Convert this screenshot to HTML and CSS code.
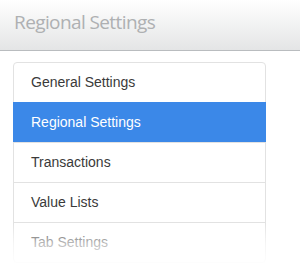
FILE: index.html
```html
<!DOCTYPE html>
<html lang="en">
<head>
  <meta charset="UTF-8">
  <title>Regional Settings</title>
  <link rel="stylesheet" href="styles.css">
</head>
<body>
  <div class="header">
    <h1>Regional Settings</h1>
  </div>

  <div class="content">
    <ul class="menu">
      <li>General Settings</li>
      <li class="active">Regional Settings</li>
      <li>Transactions</li>
      <li>Value Lists</li>
      <li>Tab Settings</li>
    </ul>
    <div class="fade"></div>
  </div>
</body>
</html>
```

FILE: styles.css
```css
* {
  margin: 0;
  padding: 0;
  box-sizing: border-box;
}

body {
  background: white;
  font-family: 'Liberation Sans', Arial, sans-serif;
  width: 300px;
  height: 271px;
  overflow: hidden;
  position: relative;
}

.header {
  height: 51px;
  background: linear-gradient(180deg, #ffffff, #e4e5e6);
  border-bottom: 1px solid #b9bcbf;
  padding: 9px 14px 0;
}

h1 {
  font-family: 'Open Sans', sans-serif;
  font-size: 19px;
  font-weight: 400;
  color: #aeb0b2;
  letter-spacing: -0.6px;
}

.content {
  padding: 11px 34px 0 13px;
}

.menu {
  list-style: none;
  border: 1px solid #e2e2e2;
  border-radius: 4px;
}

.menu li {
  height: 40px;
  line-height: 39px;
  padding-left: 17px;
  font-size: 14px;
  color: #3a3a3a;
  border-top: 1px solid #e2e2e2;
}

.menu li:first-child {
  border-top: none;
  height: 39px;
}

.menu li.active {
  background: #3b88e8;
  color: white;
  border-top-color: #3b88e8;
  margin: 0 -1px;
  padding-left: 18px;
}

.fade {
  position: absolute;
  left: 0;
  right: 0;
  bottom: 0;
  height: 48px;
  background: linear-gradient(180deg, rgba(255, 255, 255, 0), rgba(255, 255, 255, 0.65) 42%, #fff 92%);
}
```
